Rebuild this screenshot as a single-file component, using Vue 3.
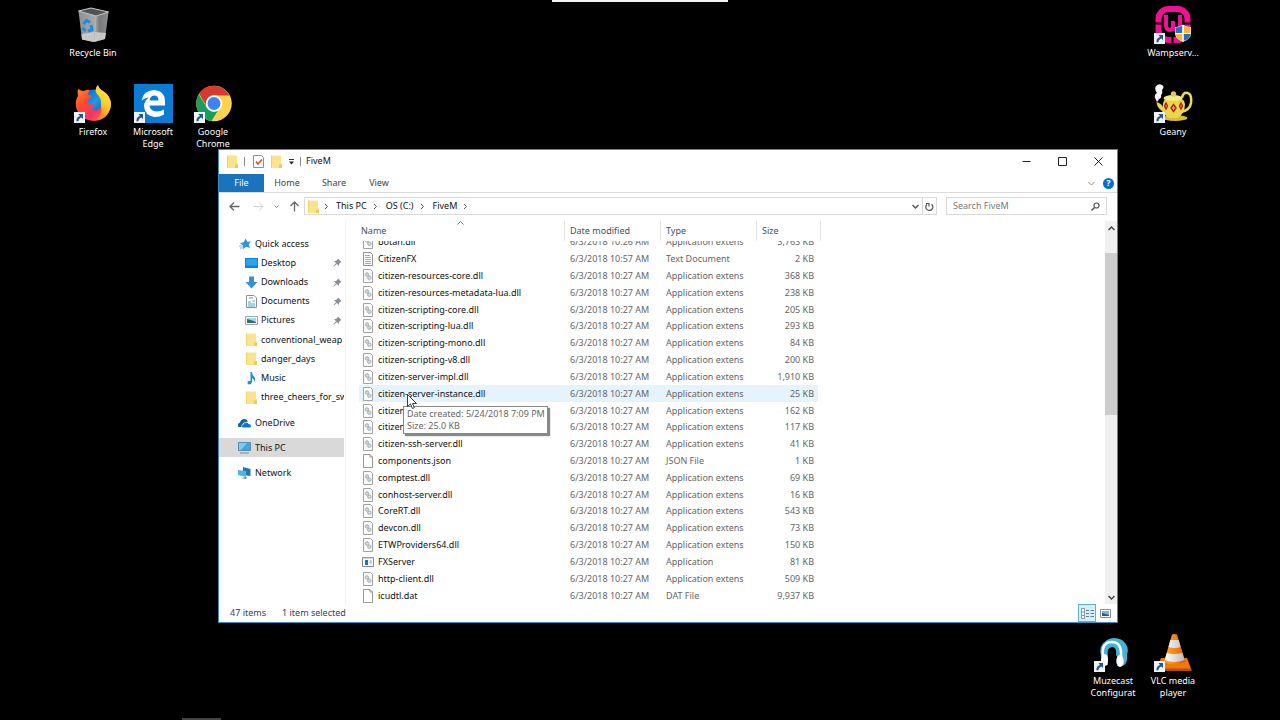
<script setup>
import { ref } from 'vue'

const search = ref('')
const shortcuts = [
  { id: 'bin', label: 'Recycle Bin', place: 'bin' },
  { id: 'firefox', label: 'Firefox', place: 'firefox', link: true },
  { id: 'edge', label: 'Microsoft Edge', place: 'edge', link: true },
  { id: 'chrome', label: 'Google Chrome', place: 'chrome', link: true },
  { id: 'wamp', label: 'Wampserv...', place: 'wamp', link: true },
  { id: 'geany', label: 'Geany', place: 'geany', link: true },
  { id: 'muzecast', label: 'Muzecast Configurat', place: 'muzecast', link: true },
  { id: 'vlc', label: 'VLC media player', place: 'vlc', link: true },
]
const quick = [
  { icon: 'star', label: 'Quick access', root: true },
  { icon: 'desktop', label: 'Desktop', pin: true },
  { icon: 'download', label: 'Downloads', pin: true },
  { icon: 'document', label: 'Documents', pin: true },
  { icon: 'picture', label: 'Pictures', pin: true },
  { icon: 'folder', label: 'conventional_weap' },
  { icon: 'folder', label: 'danger_days' },
  { icon: 'music', label: 'Music' },
  { icon: 'folder', label: 'three_cheers_for_sw' },
]
const places = [
  { icon: 'cloud', label: 'OneDrive' },
  { icon: 'pc', label: 'This PC', active: true },
  { icon: 'network', label: 'Network' },
]
const ext = 'Application extens'
const dll = (name, size, time = '10:27') => ({ name, size, type: ext, icon: 'dll', time })
const files = [
  dll('botan.dll', '3,763', '10:26'),
  { name: 'CitizenFX', size: '2', type: 'Text Document', icon: 'txt', time: '10:57' },
  dll('citizen-resources-core.dll', '368'),
  dll('citizen-resources-metadata-lua.dll', '238'),
  dll('citizen-scripting-core.dll', '205'),
  dll('citizen-scripting-lua.dll', '293'),
  dll('citizen-scripting-mono.dll', '84'),
  dll('citizen-scripting-v8.dll', '200'),
  dll('citizen-server-impl.dll', '1,910'),
  { ...dll('citizen-server-instance.dll', '25'), hover: true },
  dll('citizen-server-main.dll', '162'),
  dll('citizen-server-net.dll', '117'),
  dll('citizen-ssh-server.dll', '41'),
  { name: 'components.json', size: '1', type: 'JSON File', icon: 'blank', time: '10:27' },
  dll('comptest.dll', '69'),
  dll('conhost-server.dll', '16'),
  dll('CoreRT.dll', '543'),
  dll('devcon.dll', '73'),
  dll('ETWProviders64.dll', '150'),
  { name: 'FXServer', size: '81', type: 'Application', icon: 'exe', time: '10:27' },
  dll('http-client.dll', '509'),
  { name: 'icudtl.dat', size: '9,937', type: 'DAT File', icon: 'blank', time: '10:27' },
]
</script>

<template>
  <main class="screen">
    <svg class="defs" aria-hidden="true">
      <defs>
        <linearGradient id="gFox" x1="0" y1="0" x2="1" y2="1">
          <stop offset="0" stop-color="#ff9d2e" /><stop offset=".35" stop-color="#ff4a2f" /><stop offset=".65" stop-color="#f8336b" /><stop offset="1" stop-color="#ff9a1f" />
        </linearGradient>
        <linearGradient id="gFlame" x1=".6" y1="0" x2=".2" y2="1">
          <stop offset="0" stop-color="#fff14d" /><stop offset=".5" stop-color="#ffc824" /><stop offset="1" stop-color="#ff7a1c" />
        </linearGradient>
        <linearGradient id="gGlobe" x1="0" y1="0" x2="1" y2="1">
          <stop offset="0" stop-color="#0b57c4" /><stop offset=".5" stop-color="#1b9ce8" /><stop offset="1" stop-color="#253a92" />
        </linearGradient>
        <linearGradient id="gBin" x1="0" y1="0" x2="1" y2="0">
          <stop offset="0" stop-color="#8e9194" /><stop offset=".55" stop-color="#a6a8aa" /><stop offset=".7" stop-color="#77797b" /><stop offset="1" stop-color="#8b8d8f" />
        </linearGradient>
        <linearGradient id="gCone" x1="0" y1="0" x2="1" y2="0">
          <stop offset="0" stop-color="#ffa33a" /><stop offset=".5" stop-color="#f98411" /><stop offset="1" stop-color="#d65f00" />
        </linearGradient>
        <linearGradient id="gConeW" x1="0" y1="0" x2="1" y2="0">
          <stop offset="0" stop-color="#fff" /><stop offset="1" stop-color="#b9babc" />
        </linearGradient>
      </defs>
      <symbol id="bin" viewBox="0 0 39 39">
        <path d="M4.500 6 L17 3 L34.500 7 L31 34 L20 37 L8 34.500Z" fill="url(#gBin)" />
        <path d="M4.500 6 L17 3 L34.500 7 L22 11Z" fill="#505255" stroke="#c4c6c8" stroke-width="1" />
        <path d="M7.500 29 L20 27 L32 28 L31 34 L20 37 L8 34.500Z" fill="#c6c8c9" />
        <path d="M22 11 L20 37" stroke="#b7b9ba" stroke-width=".8" />
        <path d="M9.500 19 L12.500 15.500 L16 17.500 M17 20 L18 25 L14 26 M11.500 26 L8.500 23" fill="none" stroke="#1b8ee0" stroke-width="3" />
      </symbol>
      <symbol id="firefox" viewBox="0 0 39 39">
        <circle cx="20" cy="19" r="13.500" fill="url(#gGlobe)" />
        <path d="M4 5 Q7 7 10 7 Q13 5 16 6 Q14 8 14 11 Q18 11 18 13 Q14 15 13 18 Q15 21 20 20 Q21 22 16 24 Q20 28 25 25 Q29 22 27 14 Q26 10 22 8 Q21 3 24 1 Q25 5 29 7 Q37 12 37 21 Q35 36 20 37 Q5 36 2 23 Q1 16 4 12 Q3 8 4 5Z" fill="url(#gFox)" />
        <path d="M24 1 Q25 5 29 7 Q37 12 37 21 Q35 34 22 36 Q29 31 27 22 Q28 14 23 10 Q20 6 24 1Z" fill="url(#gFlame)" />
      </symbol>
      <symbol id="edge" viewBox="0 0 39 39">
        <path d="M0 0H39V39H0Z" fill="#0b7cd3" />
        <path d="M7.500 17 Q9 6.500 20 6 Q31 7 31 17.500 V21.500 H15.500 Q16 27 22.500 27.500 Q27 27.500 30 25.500 V30.500 Q26 33 20.500 33 Q10.500 31.500 10 22 Q10 17 15 13.500 Q9.500 14 7.500 17Z M15.700 16.500 H24.500 Q24.500 11.500 20 11.500 Q16 12 15.700 16.500Z" fill="#fff" fill-rule="evenodd" />
      </symbol>
      <symbol id="chrome" viewBox="0 0 39 39">
        <circle cx="20" cy="19.500" r="17.800" fill="#ffd34e" />
        <path d="M20 1.700 A17.800 17.800 0 0 1 35.500 11.500 H20 A8 8 0 0 0 12.500 22.500 L5 9.500 A17.800 17.800 0 0 1 20 1.700Z" fill="#d53b30" />
        <path d="M4.700 10.300 L13 24 A8 8 0 0 0 24 26.500 L17.500 37.100 A17.800 17.800 0 0 1 4.700 10.300Z" fill="#17a05d" />
        <circle cx="20" cy="19.500" r="8.200" fill="#fff" /><circle cx="20" cy="19.500" r="6.500" fill="#3e82f1" />
      </symbol>
      <symbol id="wamp" viewBox="0 0 39 39">
        <rect x="4.500" y="4" width="29" height="31" rx="10" fill="none" stroke="#f20f95" stroke-width="6" />
        <path d="M0 18.500H8M30 18.500H39M18.500 28V39" stroke="#000" stroke-width="2" />
        <path d="M12 10 V20 Q12 25 16 25 Q19 25 19 20 V16 V20 Q19 25 22.500 25 Q26 25 26 20 V10" fill="none" stroke="#f20f95" stroke-width="4" />
        <path d="M21 22 Q26 22 29 19.500 Q32 22 37 22 V28 Q37 34 29 37 Q21 34 21 28Z" fill="#fff" />
        <path d="M21.500 22.500 Q26 22.500 28.200 20.500 V28 H21.500Z M29.800 29 H36.500 Q36 34 29.800 36Z" fill="#2371bd" />
        <path d="M29.800 20.500 Q32 22.500 36.500 22.500 V28 H29.800Z M21.500 29 H28.200 V36 Q22 34 21.500 29Z" fill="#ffb52c" />
      </symbol>
      <symbol id="geany" viewBox="0 0 39 39">
        <ellipse cx="21" cy="34" rx="12.500" ry="3" fill="#d8bc32" />
        <path d="M28 14 Q29 8 33.500 9 Q38 10 37 19 Q36 26 27 28" fill="none" stroke="#eadb53" stroke-width="2.500" />
        <path d="M2.500 18 Q8 20 9 23 Q8 13 19 11.500 Q30 13 31 20 Q31 29 24 34 H15 Q10 31 8 27 Q3 24 2.500 18Z" fill="#e9d64b" />
        <ellipse cx="19" cy="14" rx="9.500" ry="3" fill="#f7ec85" /><circle cx="19.500" cy="10" r="2.700" fill="#e2cd42" />
        <path d="M12 19 l1.500 3 -1.500 3 -1.500 -3Z M19.500 20.500 l2.500 3.500 -2.500 3.500 -2.500 -3.500Z M27 19 l1.500 3 -1.500 3 -1.500 -3Z" fill="#f5a05c" stroke="#ae2024" stroke-width="1.400" />
        <path d="M1 14 Q0 10 3 9 Q0 5 2 2 Q5 -1 8 1 Q11 3 8 6 Q9 9 7 11 Q8 14 5 15 Q4 17 3 18Z" fill="#f5f5f5" />
      </symbol>
      <symbol id="muzecast" viewBox="0 0 39 39">
        <path d="M7 24 Q4 12 13 7 Q20 3 28 7 Q36 13 33 22 Q34 30 29 33 L22 22 Q23 14 18 14 Q12 15 14 23 L17 31 L11 33Z" fill="#45b2d8" />
        <path d="M14 33 V22 Q14 16 18 16 Q22 16 22 22 V33Z" fill="#000" />
        <path d="M9 24 Q7 9 18 9 Q28 9 27 24" fill="none" stroke="#fff" stroke-width="2.500" />
        <ellipse cx="10.500" cy="27" rx="3.500" ry="6" fill="#fff" /><ellipse cx="26" cy="28" rx="3.700" ry="6" fill="#fff" />
      </symbol>
      <symbol id="vlc" viewBox="0 0 39 39">
        <path d="M7 25 H33 L37.500 37 H2Z" fill="#ef790e" /><path d="M3 35.500H37L37.500 38H2Z" fill="#b94d03" />
        <path d="M18 1.500 Q20.500 .5 23 1.500 L31.500 29 Q21 34 10 29Z" fill="url(#gCone)" />
        <path d="M16.300 7 H24.700 L26.600 14 Q20.500 16 14.500 14Z M12.800 20 Q20 22 28.400 20 L30.500 27 Q20 31 10.800 27Z" fill="url(#gConeW)" />
      </symbol>
      <symbol id="arrow" viewBox="0 0 11 11">
        <path d="M0 0H11V11H0Z" fill="#eef2f6" /><path d="M2.500 9.500 Q2 5 6 4 L4.500 2 H9 V7 L7.500 5.500 Q4.500 6.500 4.500 9Z" fill="#24548c" />
      </symbol>
      <symbol id="folder" viewBox="0 0 13 13"><path d="M1 .5H11V8L12 9V13H1Z" fill="#fbe38e" /><path d="M9 9.500H12V13H9Z" fill="#eccb5c" /><path d="M1 .5H2V13H1Z" fill="#f2d472" /></symbol>
      <symbol id="star" viewBox="0 0 13 13"><path d="M6.500 1.500 L8.300 4.700 L12 4.500 L9.700 7.300 L11 11 L7.300 9.800 L4 12 L4.200 8.300 L1 6.300 L5 5Z" fill="#2c95dc" /><path d="M0 9H4M1 11H4" stroke="#76b9e6" /></symbol>
      <symbol id="desktop" viewBox="0 0 13 13"><path d="M0 2H13V12H0Z" fill="#1183d7" /><path d="M1 3H12V9.500H1Z" fill="#28a4f0" /></symbol>
      <symbol id="download" viewBox="0 0 13 13"><path d="M4 .5H9V6H12.500L6.500 12.500L.5 6H4Z" fill="#3b8fd6" /></symbol>
      <symbol id="document" viewBox="0 0 13 13"><path d="M1.500 .5H9L11.500 3V12.500H1.500Z" fill="#fff" stroke="#8a9299" /><path d="M4 3H8M3 7H6M7.500 6H10M3 9H10M3 11H10" stroke="#4ba5cf" /></symbol>
      <symbol id="picture" viewBox="0 0 13 13"><path d="M.5 2.500H12.500V10.500H.5Z" fill="#fff" stroke="#9aa4ac" /><path d="M2 4H11V9H2Z" fill="#a9d3ee" /><path d="M2 5Q6 6 11 8V9H2Z" fill="#30697b" /></symbol>
      <symbol id="music" viewBox="0 0 13 13"><path d="M5.500 0H7Q7 3 9.500 5Q11 8 9 10Q9.500 7 7 6V10Q6.500 12.500 4 12.500Q2 12 2.500 10Q3.500 8.500 5.500 9Z" fill="#1b8fd9" /></symbol>
      <symbol id="cloud" viewBox="0 0 13 13"><path d="M0 10Q-.5 7.500 2 6.500Q3 3 6.500 3Q9 3 10 5.500L8 6Q5 6 4.500 8.500Q3 9 3.500 11H1Q0 11 0 10Z" fill="#0d60ad" /><path d="M4 10Q4 8.500 5.500 8.500Q6 6.500 8 6.500Q10 6.500 10.500 8Q13 8 13 10Q13 11.500 11.500 11.500H5Q4 11.500 4 10Z" fill="#1274c7" /></symbol>
      <symbol id="pc" viewBox="0 0 13 13"><path d="M.5 1.500H12.500V9.500H.5Z" fill="#3ba9e8" stroke="#5e89a5" /><path d="M1 2H9L3 9H1Z" fill="#79ccf5" /><path d="M2 12H11" stroke="#688da6" /></symbol>
      <symbol id="network" viewBox="0 0 13 13"><path d="M5 1L12.500 3V10L5 9Z" fill="#1d79ad" /><path d="M0 4L8 5V11L0 9Z" fill="#50b5e6" /><path d="M3 12L9 11L8 13Z" fill="#5f8296" /></symbol>
      <symbol id="pin" viewBox="0 0 9 9"><path d="M5 .5L8.500 4L7.500 4.500L6 6V8L3.800 6L1 8.500L.5 8L3 5.200L1 3H3L4.500 1.500Z" fill="#8a9097" /></symbol>
      <symbol id="dll" viewBox="0 0 12 14"><path d="M1.500 .5H8.500L10.500 2.500V13.500H1.500Z" fill="#fbfbfb" stroke="#a2a2a2" /><circle cx="5" cy="5.500" r="1.700" fill="#d2dee2" stroke="#9dadb3" /><circle cx="7.300" cy="8.700" r="1.700" fill="#d2dee2" stroke="#9dadb3" /></symbol>
      <symbol id="txt" viewBox="0 0 12 14"><path d="M1.500 .5H8.500L10.500 2.500V13.500H1.500Z" fill="#fbfbfb" stroke="#929292" /><path d="M3 3.500H8M3 5.500H9M3 7.500H9M3 9.500H9M3 11.500H9" stroke="#a5a9ab" /></symbol>
      <symbol id="blank" viewBox="0 0 12 14"><path d="M1.500 .5H8L10.500 3V13.500H1.500Z M8 .5V3H10.500" fill="#fff" stroke="#979797" /></symbol>
      <symbol id="exe" viewBox="0 0 12 14"><path d="M.5 2.500H11.500V11.500H.5Z" fill="#fff" stroke="#7d8b95" /><path d="M0 3H12" stroke="#9dacb6" /><path d="M3 5H6V10H3Z" fill="#0e78cf" /><path d="M7.500 6H10M7.500 8H10" stroke="#89a4b7" /></symbol>
    </svg>

    <div class="top-bar"></div>
    <div class="task-strip"></div>

    <a v-for="s in shortcuts" :key="s.id" href="#" class="shortcut" :class="`at-${s.place}`">
      <span class="art">
        <svg class="art-main"><use :href="`#${s.id}`" /></svg>
        <svg v-if="s.link" class="art-link"><use href="#arrow" /></svg>
      </span>
      <span class="caption">{{ s.label }}</span>
    </a>

    <section class="window" aria-label="FiveM">
      <header class="title">
        <svg class="i13"><use href="#folder" /></svg>
        <i class="bar"></i>
        <button aria-label="Properties"><svg class="i13" viewBox="0 0 13 13"><path d="M1.500 .5H9.500L11.500 2.500V12.500H1.500Z" fill="#fff" stroke="#8f8f8f" /><path d="M4 6.500L6 9L10 4.500" fill="none" stroke="#d64a2a" stroke-width="1.500" /></svg></button>
        <button aria-label="New folder"><svg class="i13"><use href="#folder" /></svg></button>
        <button aria-label="Customize toolbar"><svg class="i7" viewBox="0 0 7 7"><path d="M1 1.500H6" stroke="#333" /><path d="M1 3.500H6L3.500 6.500Z" fill="#222" /></svg></button>
        <i class="bar"></i>
        <h1>FiveM</h1>
        <div class="controls">
          <button aria-label="Minimize"><svg viewBox="0 0 9 9"><path d="M.5 4.500H8.500" /></svg></button>
          <button aria-label="Maximize"><svg viewBox="0 0 9 9"><path d="M.5 .5H8.500V8.500H.5Z" /></svg></button>
          <button aria-label="Close"><svg viewBox="0 0 9 9"><path d="M.5 .5L8.500 8.500M8.500 .5L.5 8.500" /></svg></button>
        </div>
      </header>

      <nav class="tabs" aria-label="Ribbon">
        <button class="file">File</button><button>Home</button><button>Share</button><button>View</button>
        <div class="help">
          <button aria-label="Expand ribbon"><svg class="i7" viewBox="0 0 7 7"><path d="M.5 2L3.500 5L6.500 2" fill="none" stroke="#888" /></svg></button>
          <button class="q" aria-label="Help">?</button>
        </div>
      </nav>

      <div class="address">
        <div class="moves">
          <button aria-label="Back"><svg viewBox="0 0 11 11"><path d="M10.500 5.500H1M5 1.500L1 5.500L5 9.500" stroke="#666" stroke-width="1.300" /></svg></button>
          <button aria-label="Forward"><svg viewBox="0 0 11 11"><path d="M.5 5.500H10M6 1.500L10 5.500L6 9.500" stroke="#d2d2d2" /></svg></button>
          <button class="recent" aria-label="Recent locations"><svg viewBox="0 0 11 11"><path d="M3.500 4.500L5.500 6.500L7.500 4.500" stroke="#777" /></svg></button>
          <button aria-label="Up"><svg viewBox="0 0 11 11"><path d="M5.500 10.500V1M1.500 5L5.500 1L9.500 5" stroke="#666" stroke-width="1.300" /></svg></button>
        </div>
        <div class="path">
          <svg class="i13"><use href="#folder" /></svg>
          <svg class="sep first" viewBox="0 0 5 7"><path d="M1 1L3.500 3.500L1 6" /></svg>
          <a href="#">This PC</a>
          <svg class="sep" viewBox="0 0 5 7"><path d="M1 1L3.500 3.500L1 6" /></svg>
          <a href="#">OS (C:)</a>
          <svg class="sep" viewBox="0 0 5 7"><path d="M1 1L3.500 3.500L1 6" /></svg>
          <a href="#">FiveM</a>
          <svg class="sep" viewBox="0 0 5 7"><path d="M1 1L3.500 3.500L1 6" /></svg>
          <button class="drop" aria-label="Previous locations"><svg class="i7" viewBox="0 0 7 7"><path d="M.5 2L3.500 5L6.500 2" fill="none" stroke="#555" stroke-width="1.500" /></svg></button>
          <button class="reload" aria-label="Refresh"><svg viewBox="0 0 9 9"><path d="M2 2.300A3.500 3.500 0 1 0 6.500 2.200M1 1.500H4V4.500" fill="none" stroke="#555" stroke-width="1.200" /></svg></button>
        </div>
        <label class="search">
          <input v-model="search" type="text" placeholder="Search FiveM" aria-label="Search FiveM" />
          <svg viewBox="0 0 9 9"><circle cx="5.500" cy="3.500" r="2.500" fill="none" stroke="#555" stroke-width="1.200" /><path d="M3.500 5.500L.5 8.500" stroke="#555" stroke-width="1.500" /></svg>
        </label>
      </div>

      <div class="body">
        <nav class="side" aria-label="Folders">
          <div class="quick">
            <a v-for="q in quick" :key="q.label" href="#" :class="{ child: !q.root }">
              <svg class="i13"><use :href="`#${q.icon}`" /></svg><span>{{ q.label }}</span>
              <svg v-if="q.pin" class="pin"><use href="#pin" /></svg>
            </a>
          </div>
          <a v-for="p in places" :key="p.label" href="#" class="place" :class="{ active: p.active }">
            <svg class="i13"><use :href="`#${p.icon}`" /></svg><span>{{ p.label }}</span>
          </a>
        </nav>

        <div class="list">
          <table>
            <thead>
              <tr>
                <th>Name<svg class="sort" viewBox="0 0 7 4"><path d="M.5 3.500L3.500 .5L6.500 3.500" fill="none" stroke="#777" /></svg></th>
                <th>Date modified</th><th>Type</th><th>Size</th>
              </tr>
            </thead>
            <tbody>
              <tr v-for="f in files" :key="f.name" :class="{ hover: f.hover }">
                <td class="name"><svg><use :href="`#${f.icon}`" /></svg>{{ f.name }}</td>
                <td>6/3/2018 {{ f.time }} AM</td>
                <td>{{ f.type }}</td>
                <td class="size">{{ f.size }} KB</td>
              </tr>
            </tbody>
          </table>
        </div>

        <div class="scroll">
          <button aria-label="Scroll up"><svg class="i7" viewBox="0 0 7 7"><path d="M.5 5L3.500 2L6.500 5" fill="none" stroke="#444" stroke-width="1.500" /></svg></button>
          <div class="track"><div class="thumb"></div></div>
          <button aria-label="Scroll down"><svg class="i7" viewBox="0 0 7 7"><path d="M.5 2L3.500 5L6.500 2" fill="none" stroke="#444" stroke-width="1.500" /></svg></button>
        </div>
      </div>

      <footer class="status">
        <span>47 items</span><span>1 item selected</span>
        <div class="views">
          <button class="on" aria-label="Details view"><svg viewBox="0 0 13 11"><path d="M.5 .5H3.500V10.500H.5ZM.5 4H3.500M.5 7.500H3.500" fill="#fff" stroke="#8798a3" /><path d="M5 2.500H8M9.500 2.500H13M5 5.500H8M9.500 5.500H13M5 8.500H8M9.500 8.500H13" stroke="#667b87" /></svg></button>
          <button aria-label="Large icons view"><svg viewBox="0 0 13 11"><path d="M1.500 1.500H11.500V9.500H1.500Z" fill="#fff" stroke="#8d8d8d" /><path d="M3 3H10V8H3Z" fill="#79b6dd" /><path d="M3 5L10 7V8H3Z" fill="#245b78" /></svg></button>
        </div>
      </footer>

      <div class="tip" role="tooltip">Date created: 5/24/2018 7:09 PM<br />Size: 25.0 KB</div>
      <svg class="cursor" viewBox="0 0 10 16"><path d="M.5 .5V12.500L3.500 10L5.500 14.500L7.500 13.500L5.500 9.500H9.500Z" fill="#fff" stroke="#222" stroke-width=".9" /></svg>
    </section>
  </main>
</template>

<style>
html, body { background: #000; }
</style>

<style scoped>
.screen { position: relative; min-height: 100vh; overflow: hidden; background: #000; font: 9px/12px "Noto Sans", "Open Sans", sans-serif; color: #111; }
.screen *, .screen { box-sizing: border-box; }
.defs { position: absolute; width: 0; height: 0; }
button { border: 0; margin: 0; padding: 0; background: none; font: inherit; color: inherit; display: flex; align-items: center; justify-content: center; }
a { color: inherit; text-decoration: none; }
svg { flex: none; display: block; fill: none; }
.i13 { width: 13px; height: 13px; }
.i7 { width: 7px; height: 7px; }

.top-bar { position: absolute; top: 0; left: 552px; width: 176px; height: 2px; background: #f4f4f4; }
.task-strip { position: absolute; bottom: 0; left: 182px; width: 39px; height: 2px; background: #444; }

.shortcut { position: absolute; width: 60px; display: flex; flex-direction: column; align-items: center; gap: 3px; color: #fff; text-align: center; }
.caption { padding: 0 5px; }
.art { position: relative; width: 39px; height: 39px; }
.art-main { width: 39px; height: 39px; }
.art-link { position: absolute; left: 0; bottom: 0; width: 11px; height: 11px; }
.at-bin { left: 63px; top: 5px; }
.at-firefox { left: 63px; top: 84px; }
.at-edge { left: 123px; top: 84px; }
.at-chrome { left: 183px; top: 84px; }
.at-wamp { right: 77px; top: 5px; }
.at-geany { right: 77px; top: 84px; }
.at-muzecast { right: 137px; bottom: 21px; }
.at-vlc { right: 77px; bottom: 21px; }

.window { position: absolute; left: 218px; right: 162px; top: 149px; bottom: 97px; background: #fff; border: 1px solid #3a8dca; display: flex; flex-direction: column; }
.title { display: flex; align-items: center; height: 24px; padding: 0 1px 2px 7px; }
.title .bar { width: 1px; height: 9px; background: #888; margin-left: 5px; }
.title .bar + button { margin-left: 7px; }
.title button + button { margin-left: 5px; }
.title h1 { font: inherit; margin: 0 0 0 5px; }
.controls { margin-left: auto; display: flex; }
.title .controls button { width: 36px; height: 22px; margin: 0; }
.controls svg { width: 9px; height: 9px; stroke: #222; }

.tabs { display: flex; height: 19px; border-bottom: 1px solid #dcdcdc; color: #444; }
.tabs > button { width: 46px; }
.tabs > .file { width: 45px; background: #1a73bd; color: #fff; height: 18px; }
.tabs > button:nth-child(3) { width: 48px; }
.tabs > button:nth-child(4) { width: 42px; }
.help { margin-left: auto; display: flex; align-items: center; gap: 8px; padding-right: 3px; }
.q { width: 11px; height: 11px; border-radius: 50%; background: #0b6fc4; color: #fff; font-weight: bold; }

.address { display: flex; align-items: center; height: 27px; padding: 0 10px 1px; }
.moves { display: flex; width: 75px; gap: 13px; }
.moves svg { width: 11px; height: 11px; }
.moves button { width: 11px; }
.moves .recent { margin: 0 -6px; }
.path { flex: 1; display: flex; align-items: center; height: 18px; border: 1px solid #d9d9d9; padding-left: 2px; }
.sep { width: 5px; height: 7px; stroke: #555; margin: 0 8px 0 6px; }
.sep.first { margin: 0 7px 0 4px; }
.drop { margin-left: auto; width: 13px; height: 16px; }
.reload { width: 14px; height: 16px; border-left: 1px solid #d9d9d9; }
.reload svg { width: 9px; height: 9px; }
.search { display: flex; align-items: center; width: 161px; height: 18px; border: 1px solid #d9d9d9; margin-left: 9px; padding: 0 6px; }
.search input { flex: 1; min-width: 0; border: 0; padding: 0; outline: 0; font: inherit; background: none; }
.search input::placeholder { color: #777; }
.search svg { width: 9px; height: 9px; }

.body { flex: 1; min-height: 0; display: flex; }
.side { width: 127px; border-right: 1px solid #f0f0f0; padding: 14px 1px 0 0; overflow: hidden; white-space: nowrap; }
.quick { height: 173px; display: grid; grid-template-rows: repeat(9, 1fr); margin-bottom: 6px; }
.side a { display: flex; align-items: center; padding-left: 20px; gap: 3px; overflow: hidden; }
.side a.child { padding-left: 26px; gap: 3px; }
.side .place { height: 19px; margin-bottom: 6px; padding-left: 19px; gap: 4px; }
.side .active { background: #d9d9d9; }
.pin { width: 9px; height: 9px; margin-left: auto; margin-right: 2px; }

.list { flex: 1; overflow: hidden; padding: 1px 0 0 13px; white-space: nowrap; }
table { display: block; width: 462px; }
thead, tbody { display: grid; }
thead { position: relative; background: #fff; height: 20px; color: #44506c; }
tbody { height: 370px; margin-top: -7px; grid-template-rows: repeat(22, 1fr); color: #666; }
tr { display: grid; grid-template-columns: 206px 96px 96px 64px; }
tbody tr { width: 459px; }
th, td { display: flex; align-items: center; padding: 0 0 0 5px; font-weight: normal; }
th { position: relative; border-right: 1px solid #e4e4e4; }
th:first-child { padding-left: 2px; }
.sort { position: absolute; left: 98px; top: 0; width: 7px; height: 4px; }
td.name { gap: 4px; padding-left: 3px; color: #111; }
.name svg { width: 12px; height: 14px; }
td.size { justify-content: flex-end; padding: 0; margin-right: 7px; }
tbody tr.hover { background: #e5f3fd; }

.scroll { width: 12px; margin-top: 1px; background: #f0f0f0; display: flex; flex-direction: column; }
.scroll button { height: 14px; }
.track { flex: 1; padding-top: 18px; }
.thumb { height: 48%; background: #cdcdcd; }

.status { display: flex; align-items: center; height: 18px; padding-left: 11px; gap: 16px; color: #34426a; }
.views { margin-left: auto; display: flex; align-self: stretch; padding-right: 3px; }
.views button { width: 18px; }
.views .on { background: #d3effa; border: 1px solid #57b3d6; }
.views svg { width: 13px; height: 11px; }

.tip { position: absolute; left: 184px; top: 256px; padding: 1px 2px 1px 3px; border: 1px solid #888; background: #fff; color: #666; box-shadow: 2px 2px 1px #888; white-space: nowrap; }
.cursor { position: absolute; left: 188px; top: 244px; width: 10px; height: 16px; }
</style>
